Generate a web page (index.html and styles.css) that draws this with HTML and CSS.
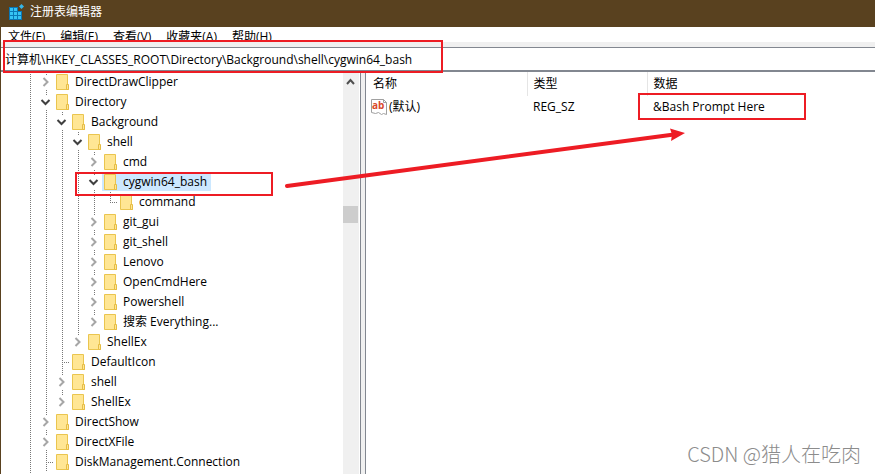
FILE: index.html
```html
<!DOCTYPE html>
<html lang="zh-CN">
<head>
<meta charset="utf-8">
<title>注册表编辑器</title>
<link rel="stylesheet" href="styles.css">
</head>
<body>
<svg class="defs" width="0" height="0" aria-hidden="true">
  <symbol id="folder" viewBox="0 0 14 16">
    <path d="M.5.5h11v11h1v4H.5z" fill="#ffe694" stroke="#eac54f"/>
    <path d="M10.5 15.5v-5h2v5z" fill="#ffe694" stroke="#e6bd45"/>
  </symbol>
  <symbol id="closed" viewBox="0 0 16 14">
    <path d="M5.500 3l4 4-4 4" fill="none" stroke="#a6a6a6" stroke-width="2"/>
  </symbol>
  <symbol id="open" viewBox="0 0 16 14">
    <path d="M3.500 5l4 4 4-4" fill="none" stroke="#404040" stroke-width="2"/>
  </symbol>
</svg>
<div class="window">
  <header class="titlebar">
    <svg class="app-icon" viewBox="0 0 16 16" width="16" height="16" aria-hidden="true">
      <path d="M0 3h13v13H0z" fill="#0a77b5"/>
      <path d="M1 4h3v3H1zM5 4h3v3H5zM1 8h3v3H1zM5 8h3v3H5zM9 8h3v3H9zM1 12h3v3H1zM5 12h3v3H5zM9 12h3v3H9z" fill="#35c3f3"/>
      <path d="M9 1h6v6H9z" fill="#59411f"/>
      <path d="M12.500 0l2.500 2.500-2.500 2.500L10 2.500z" fill="#35b5e8"/>
    </svg>
    <h1>注册表编辑器</h1>
  </header>
  <nav class="menu">
    <button type="button">文件(F)</button>
    <button type="button">编辑(E)</button>
    <button type="button">查看(V)</button>
    <button type="button">收藏夹(A)</button>
    <button type="button">帮助(H)</button>
  </nav>
  <div class="address">
    <input type="text" aria-label="地址" value="计算机\HKEY_CLASSES_ROOT\Directory\Background\shell\cygwin64_bash">
  </div>
  <main class="panes">
    <div class="tree">
      <ul class="root">
        <li><div class="row"><button type="button" aria-label="展开"><svg><use href="#closed"/></svg></button><svg class="folder"><use href="#folder"/></svg><span>DirectDrawClipper</span></div></li>
        <li><div class="row"><button type="button" aria-label="折叠"><svg><use href="#open"/></svg></button><svg class="folder"><use href="#folder"/></svg><span>Directory</span></div>
          <ul>
            <li><div class="row"><button type="button" aria-label="折叠"><svg><use href="#open"/></svg></button><svg class="folder"><use href="#folder"/></svg><span>Background</span></div>
              <ul>
                <li><div class="row"><button type="button" aria-label="折叠"><svg><use href="#open"/></svg></button><svg class="folder"><use href="#folder"/></svg><span>shell</span></div>
                  <ul>
                    <li><div class="row"><button type="button" aria-label="展开"><svg><use href="#closed"/></svg></button><svg class="folder"><use href="#folder"/></svg><span>cmd</span></div></li>
                    <li><div class="row selected"><button type="button" aria-label="折叠"><svg><use href="#open"/></svg></button><svg class="folder"><use href="#folder"/></svg><span>cygwin64_bash</span></div>
                      <ul>
                        <li><div class="row leaf"><svg class="folder"><use href="#folder"/></svg><span>command</span></div></li>
                      </ul>
                    </li>
                    <li><div class="row"><button type="button" aria-label="展开"><svg><use href="#closed"/></svg></button><svg class="folder"><use href="#folder"/></svg><span>git_gui</span></div></li>
                    <li><div class="row"><button type="button" aria-label="展开"><svg><use href="#closed"/></svg></button><svg class="folder"><use href="#folder"/></svg><span>git_shell</span></div></li>
                    <li><div class="row"><button type="button" aria-label="展开"><svg><use href="#closed"/></svg></button><svg class="folder"><use href="#folder"/></svg><span>Lenovo</span></div></li>
                    <li><div class="row"><button type="button" aria-label="展开"><svg><use href="#closed"/></svg></button><svg class="folder"><use href="#folder"/></svg><span>OpenCmdHere</span></div></li>
                    <li><div class="row"><button type="button" aria-label="展开"><svg><use href="#closed"/></svg></button><svg class="folder"><use href="#folder"/></svg><span>Powershell</span></div></li>
                    <li><div class="row"><button type="button" aria-label="展开"><svg><use href="#closed"/></svg></button><svg class="folder"><use href="#folder"/></svg><span>搜索 Everything...</span></div></li>
                  </ul>
                </li>
                <li><div class="row"><button type="button" aria-label="展开"><svg><use href="#closed"/></svg></button><svg class="folder"><use href="#folder"/></svg><span>ShellEx</span></div></li>
              </ul>
            </li>
            <li><div class="row leaf"><svg class="folder"><use href="#folder"/></svg><span>DefaultIcon</span></div></li>
            <li><div class="row"><button type="button" aria-label="展开"><svg><use href="#closed"/></svg></button><svg class="folder"><use href="#folder"/></svg><span>shell</span></div></li>
            <li><div class="row"><button type="button" aria-label="展开"><svg><use href="#closed"/></svg></button><svg class="folder"><use href="#folder"/></svg><span>ShellEx</span></div></li>
          </ul>
        </li>
        <li><div class="row"><button type="button" aria-label="展开"><svg><use href="#closed"/></svg></button><svg class="folder"><use href="#folder"/></svg><span>DirectShow</span></div></li>
        <li><div class="row"><button type="button" aria-label="展开"><svg><use href="#closed"/></svg></button><svg class="folder"><use href="#folder"/></svg><span>DirectXFile</span></div></li>
        <li class="more"><div class="row leaf"><svg class="folder"><use href="#folder"/></svg><span>DiskManagement.Connection</span></div></li>
      </ul>
    </div>
    <div class="scrollbar">
      <button type="button" aria-label="向上滚动"><svg viewBox="0 0 16 16"><path d="M4 11l3.500-4L11 11" fill="none" stroke="#505050" stroke-width="2"/></svg></button>
      <div class="thumb"></div>
    </div>
    <div class="splitter"></div>
    <div class="values">
      <table>
        <thead><tr><th class="name">名称</th><th class="type">类型</th><th>数据</th></tr></thead>
        <tbody><tr>
          <td class="name"><div class="value-name"><svg viewBox="0 0 16 16" width="16" height="16" aria-hidden="true">
            <path d="M.5.5h12l3 3v12l-3-1-2 1-3-2-3 1-4-1z" fill="#fff" stroke="#a0a0a0"/>
            <path d="M12.500.5v3h3" fill="none" stroke="#a0a0a0"/>
            <text class="glyph" x="1" y="10">ab</text>
          </svg>(默认)</div></td>
          <td>REG_SZ</td><td>&amp;Bash Prompt Here</td>
        </tr></tbody>
      </table>
    </div>
  </main>
</div>
<svg class="marks" width="875" height="474" viewBox="0 0 875 474" aria-hidden="true">
  <g fill="none" stroke="#ed1c24" stroke-width="2">
    <path d="M4 41h438v31H4zM76 173h196v22H76zM639 94h166v25H639z"/>
    <path d="M287 186L674 134.500" stroke-width="4" stroke-linecap="round"/>
  </g>
  <path d="M685 133l-15-4.500 2 6-1 6.500z" fill="#ed1c24"/>
</svg>
<div class="watermark">CSDN @猎人在吃肉</div>
</body>
</html>
```
FILE: styles.css
```css
* {
  box-sizing: border-box;
}

body {
  margin: 0;
  background: #fff;
  color: #000;
  font: 12px/20px "Open Sans", "Noto Sans CJK SC", sans-serif;
  overflow: hidden;
}

button,
input {
  margin: 0;
  padding: 0;
  border: 0;
  background: none;
  color: inherit;
  font: inherit;
}

.defs {
  display: none;
}

.window {
  display: flex;
  flex-direction: column;
  height: 100vh;
  border-left: 1px solid #59411f;
}

.titlebar {
  display: flex;
  align-items: center;
  gap: 5px;
  height: 27px;
  flex: none;
  padding: 0 8px 3px;
  background: #59411f;
  color: #fff;
}

.titlebar h1 {
  margin: 0;
  font-size: 12px;
  font-weight: 400;
}

.menu {
  display: flex;
  gap: 15px;
  height: 15px;
  flex: none;
  padding-left: 7px;
  overflow: hidden;
}

.menu button {
  height: 20px;
}

.address {
  flex: none;
  padding-top: 5px;
  background: #f0f0f0;
}

.address input {
  display: block;
  width: 100%;
  height: 25px;
  padding-left: 4px;
  border-top: 1px solid #828790;
  border-bottom: 2px solid #828790;
  background: #fff;
}

.panes {
  display: flex;
  flex: 1;
  min-height: 0;
}

.tree {
  width: 342px;
  flex: none;
  padding-left: 29px;
  overflow: hidden;
}

.tree ul {
  margin: 0;
  padding: 0 0 0 16px;
  list-style: none;
}

.tree .root {
  padding-left: 8px;
  min-height: 100%;
  background: repeating-linear-gradient(#777 0 1px, transparent 1px 2px) 0 0 / 1px 100% no-repeat;
}

.tree li {
  background: repeating-linear-gradient(#777 0 1px, transparent 1px 2px) 8px 0 / 1px 100% no-repeat;
}

.tree li:last-child {
  background-size: 1px 10px;
}

.tree .more:last-child {
  background-size: 1px 100%;
}

.row {
  display: flex;
  align-items: center;
  height: 20px;
}

.row button {
  width: 16px;
  height: 14px;
  flex: none;
  background: linear-gradient(#fff, #fff) 3px 0 / 12px 14px no-repeat;
}

.row button svg {
  display: block;
  width: 16px;
  height: 14px;
}

.row .folder {
  width: 16px;
  height: 16px;
  flex: none;
  margin-left: 1px;
}

.row span {
  padding: 0 4px;
}

.row.leaf {
  padding-left: 16px;
  background: repeating-linear-gradient(90deg, #777 0 1px, transparent 1px 2px) 8px 10px / 8px 1px no-repeat;
}

.row.selected {
  width: max-content;
  background: linear-gradient(#cce8ff, #cce8ff) 16px 0 / 100% 19px no-repeat;
}

.scrollbar {
  width: 16px;
  flex: none;
  background: #f0f0f0;
}

.scrollbar button {
  display: block;
  width: 16px;
  height: 18px;
}

.scrollbar svg {
  display: block;
  width: 16px;
  height: 16px;
}

.thumb {
  width: 15px;
  height: 17px;
  margin-top: 116px;
  background: #cdcdcd;
}

.splitter {
  width: 6px;
  flex: none;
  margin-left: 1px;
  border: solid #828790;
  border-width: 0 1px;
  background: #f0f0f0;
}

.values {
  flex: 1;
  min-width: 0;
}

table {
  width: 100%;
  border-collapse: collapse;
  table-layout: fixed;
}

th,
td {
  height: 24px;
  padding: 0 6px;
  font-weight: 400;
  text-align: left;
}

td {
  height: 22px;
}

th.name {
  width: 161px;
  padding-left: 7px;
}

th.type {
  width: 120px;
}

th.name,
th.type {
  border-right: 1px solid #e5e5e5;
}

td.name {
  padding-left: 5px;
}

.value-name {
  display: flex;
  align-items: center;
  gap: 2px;
}

.glyph {
  fill: #d9492a;
  font: 700 10px "Open Sans", sans-serif;
}

.marks {
  position: absolute;
  top: 0;
  left: 0;
}

.watermark {
  position: absolute;
  right: 14px;
  bottom: 5px;
  color: #8c8c8c;
  font: 300 20px/30px "Noto Sans CJK SC", sans-serif;
}
```
